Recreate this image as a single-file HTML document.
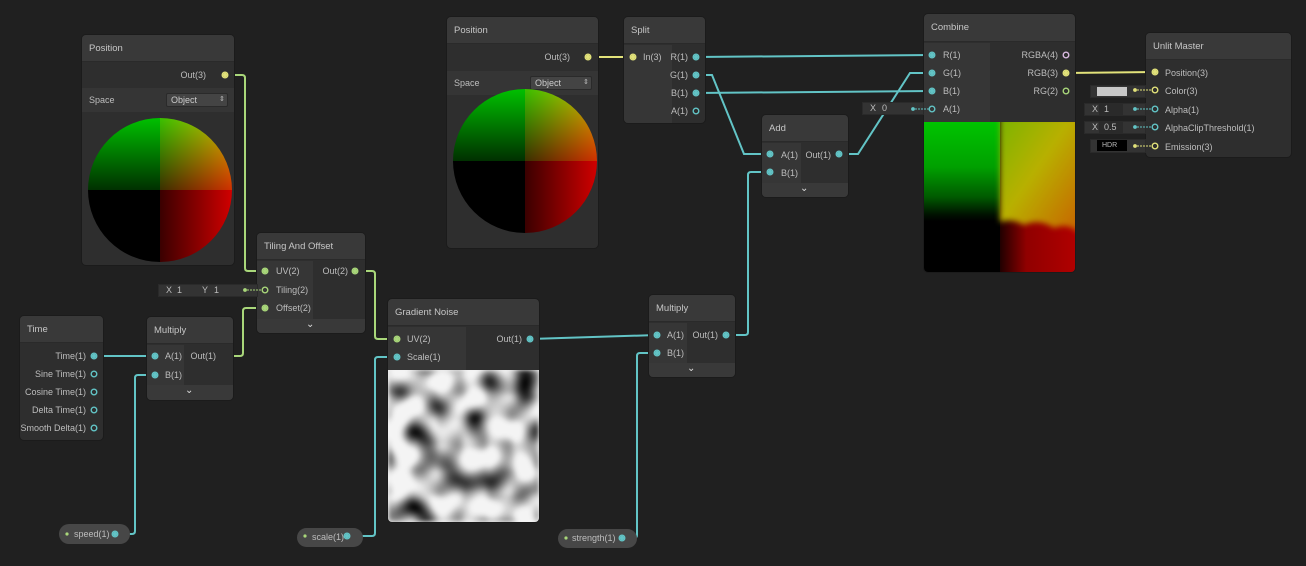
<!DOCTYPE html>
<html><head><meta charset="utf-8"><style>
*{margin:0;padding:0;box-sizing:border-box}
body{width:1306px;height:566px;background:#202020;overflow:hidden;position:relative;font-family:"Liberation Sans",sans-serif;font-size:9px;color:#bdbdbd}
.n{position:absolute;background:#2e2e2e;border-radius:4px;box-shadow:0 0 0 1px #1b1b1b}
.t{position:absolute;left:0;right:0;top:0;background:#393939;border-radius:4px 4px 0 0;border-bottom:1px solid #2a2a2a;padding-left:7px;color:#c6c6c6;font-size:9.5px}
.b{position:absolute}
.l{position:absolute;white-space:nowrap;line-height:10px}
.r{text-align:right}
svg{position:absolute;left:0;top:0}
.pill{position:absolute;background:#474747;border-radius:10px}
.fld{position:absolute;background:#333;border:1px solid #2a2a2a}
</style></head><body>
<svg width="1306" height="566" fill="none" stroke-width="2">
<g stroke="#62c4c6">
<path d="M94 356H155"/>
<path d="M115 534H132Q135 534 135 531V378Q135 375 138 375H155"/>
<path d="M347 536H372Q375 536 375 533V360Q375 357 378 357H397"/>
<path d="M530 339L657 335"/>
<path d="M622 538H634Q637 538 637 535V356Q637 353 640 353H657"/>
<path d="M726 335H745Q748 335 748 332V175Q748 172 751 172H770"/>
<path d="M696 57L932 55"/>
<path d="M696 75H712L744 154H770"/>
<path d="M696 93L932 91"/>
<path d="M839 154H858L910 73H932"/>
</g>
<g stroke="#a9d77a">
<path d="M225 75H242Q245 75 245 78V268Q245 271 248 271H265"/>
<path d="M355 271H372Q375 271 375 274V336Q375 339 378 339H397"/>
<path d="M225 356H240Q243 356 243 353V311Q243 308 246 308H265"/>
</g>
<g stroke="#e2e27a">
<path d="M588 57H633"/>
<path d="M1066 73L1155 72"/>
</g>
</svg>

<!-- Position 1 -->
<div class="n" style="left:82px;top:35px;width:152px;height:230px">
<div class="t" style="height:27px;line-height:27px">Position</div>
<div class="l r" style="right:28px;top:35px">Out(3)</div>
<div class="b" style="left:0;right:0;top:53px;height:24px;background:#353535"></div>
<div class="l" style="left:7px;top:60px">Space</div>
<div class="b" style="left:84px;top:58px;width:62px;height:14px;background:#444;border-radius:2px;border:1px solid #2a2a2a"></div>
<div class="l" style="left:89px;top:60px;color:#ccc">Object</div>
<div class="l" style="left:137px;top:60px;font-size:7px">⇕</div>
</div>
<!-- Position 2 -->
<div class="n" style="left:447px;top:17px;width:151px;height:231px">
<div class="t" style="height:27px;line-height:27px">Position</div>
<div class="l r" style="right:28px;top:35px">Out(3)</div>
<div class="b" style="left:0;right:0;top:54px;height:24px;background:#353535"></div>
<div class="l" style="left:7px;top:61px">Space</div>
<div class="b" style="left:83px;top:59px;width:62px;height:14px;background:#444;border-radius:2px;border:1px solid #2a2a2a"></div>
<div class="l" style="left:88px;top:61px;color:#ccc">Object</div>
<div class="l" style="left:136px;top:61px;font-size:7px">⇕</div>
</div>
<!-- Split -->
<div class="n" style="left:624px;top:17px;width:81px;height:106px">
<div class="t" style="height:27px;line-height:27px">Split</div>
<div class="b" style="left:0;top:28px;width:48px;bottom:0;background:#363636;border-radius:0 0 0 4px"></div>
<div class="l" style="left:19px;top:35px">In(3)</div>
<div class="l r" style="right:17px;top:35px">R(1)</div>
<div class="l r" style="right:17px;top:53px">G(1)</div>
<div class="l r" style="right:17px;top:71px">B(1)</div>
<div class="l r" style="right:17px;top:89px">A(1)</div>
</div>
<!-- Combine -->
<div class="n" style="left:924px;top:14px;width:151px;height:258px;overflow:hidden">
<div class="t" style="height:28px;line-height:28px">Combine</div>
<div class="b" style="left:0;top:29px;width:66px;height:79px;background:#363636"></div>
<div class="l" style="left:19px;top:36px">R(1)</div>
<div class="l" style="left:19px;top:54px">G(1)</div>
<div class="l" style="left:19px;top:72px">B(1)</div>
<div class="l" style="left:19px;top:90px">A(1)</div>
<div class="l r" style="right:17px;top:36px">RGBA(4)</div>
<div class="l r" style="right:17px;top:54px">RGB(3)</div>
<div class="l r" style="right:17px;top:72px">RG(2)</div>
<svg style="left:0;top:108px" width="151" height="150">
<defs>
<linearGradient id="cg" x1="0" y1="0" x2="0" y2="1"><stop offset="0" stop-color="#00c400"/><stop offset=".3" stop-color="#00a000"/><stop offset=".5" stop-color="#005a00"/><stop offset=".62" stop-color="#001000"/><stop offset=".66" stop-color="#000"/></linearGradient>
<linearGradient id="cy" x1="0" y1="0" x2="1" y2="1"><stop offset="0" stop-color="#7ab400"/><stop offset=".45" stop-color="#b8b000"/><stop offset="1" stop-color="#c86000"/></linearGradient>
<linearGradient id="cr" x1="0" y1="0" x2="1" y2="0"><stop offset="0" stop-color="#200000"/><stop offset=".35" stop-color="#900000"/><stop offset="1" stop-color="#b00000"/></linearGradient>
<filter id="bl"><feGaussianBlur stdDeviation="3"/></filter>
</defs>
<rect x="0" y="0" width="76" height="150" fill="url(#cg)"/>
<rect x="76" y="0" width="75" height="150" fill="url(#cr)"/>
<path d="M76 -5H156V112Q145 100 130 106Q115 96 100 103Q88 96 76 100Z" fill="url(#cy)" filter="url(#bl)"/>
</svg>
</div>
<!-- Unlit Master -->
<div class="n" style="left:1146px;top:33px;width:145px;height:124px">
<div class="t" style="height:27px;line-height:27px">Unlit Master</div>
<div class="l" style="left:19px;top:35px">Position(3)</div>
<div class="l" style="left:19px;top:53px">Color(3)</div>
<div class="l" style="left:19px;top:72px">Alpha(1)</div>
<div class="l" style="left:19px;top:90px">AlphaClipThreshold(1)</div>
<div class="l" style="left:19px;top:109px">Emission(3)</div>
</div>
<!-- Master fields -->
<div class="fld" style="left:1090px;top:85px;width:56px;height:13px"></div>
<div class="b" style="left:1097px;top:87px;width:30px;height:9px;background:#c8c8c8"></div>
<div class="fld" style="left:1084px;top:103px;width:62px;height:13px"></div>
<div class="l" style="left:1092px;top:104px">X</div><div class="b" style="left:1099px;top:104px;width:24px;height:11px;background:#2a2a2a"></div><div class="l" style="left:1104px;top:104px">1</div>
<div class="fld" style="left:1084px;top:121px;width:62px;height:13px"></div>
<div class="l" style="left:1092px;top:122px">X</div><div class="b" style="left:1099px;top:122px;width:24px;height:11px;background:#2a2a2a"></div><div class="l" style="left:1104px;top:122px">0.5</div>
<div class="fld" style="left:1090px;top:139px;width:56px;height:14px"></div>
<div class="b" style="left:1097px;top:140px;width:30px;height:11px;background:#000"></div>
<div class="l" style="left:1102px;top:141px;font-size:7px;color:#bbb">HDR</div>
<!-- X 0 field -->
<div class="fld" style="left:862px;top:102px;width:62px;height:13px"></div>
<div class="l" style="left:870px;top:103px">X</div><div class="l" style="left:882px;top:103px">0</div>
<!-- Add -->
<div class="n" style="left:762px;top:115px;width:86px;height:82px">
<div class="t" style="height:27px;line-height:27px">Add</div>
<div class="b" style="left:0;top:28px;width:39px;height:40px;background:#363636"></div>
<div class="l" style="left:19px;top:35px">A(1)</div>
<div class="l" style="left:19px;top:53px">B(1)</div>
<div class="l r" style="right:17px;top:35px">Out(1)</div>
<div class="b" style="left:0;right:0;top:68px;bottom:0;background:#393939;border-radius:0 0 4px 4px"></div>
<div class="l" style="left:38px;top:69px;font-size:10px;color:#ddd">⌄</div>
</div>
<!-- Tiling and offset -->
<div class="n" style="left:257px;top:233px;width:108px;height:100px">
<div class="t" style="height:27px;line-height:27px">Tiling And Offset</div>
<div class="b" style="left:0;top:28px;width:56px;height:58px;background:#363636"></div>
<div class="l" style="left:19px;top:33px">UV(2)</div>
<div class="l" style="left:19px;top:52px">Tiling(2)</div>
<div class="l" style="left:19px;top:70px">Offset(2)</div>
<div class="l r" style="right:17px;top:33px">Out(2)</div>
<div class="b" style="left:0;right:0;top:86px;bottom:0;background:#393939;border-radius:0 0 4px 4px"></div>
<div class="l" style="left:49px;top:87px;font-size:10px;color:#ddd">⌄</div>
</div>
<div class="fld" style="left:158px;top:284px;width:100px;height:13px"></div>
<div class="l" style="left:166px;top:285px">X</div><div class="l" style="left:177px;top:285px">1</div>
<div class="l" style="left:202px;top:285px">Y</div><div class="l" style="left:214px;top:285px">1</div>
<!-- Time -->
<div class="n" style="left:20px;top:316px;width:83px;height:124px">
<div class="t" style="height:27px;line-height:27px">Time</div>
<div class="l r" style="right:17px;top:35px">Time(1)</div>
<div class="l r" style="right:17px;top:53px">Sine Time(1)</div>
<div class="l r" style="right:17px;top:71px">Cosine Time(1)</div>
<div class="l r" style="right:17px;top:89px">Delta Time(1)</div>
<div class="l r" style="right:17px;top:107px">Smooth Delta(1)</div>
</div>
<!-- Multiply 1 -->
<div class="n" style="left:147px;top:317px;width:86px;height:83px">
<div class="t" style="height:27px;line-height:27px">Multiply</div>
<div class="b" style="left:0;top:28px;width:37px;height:40px;background:#363636"></div>
<div class="l" style="left:18px;top:34px">A(1)</div>
<div class="l" style="left:18px;top:53px">B(1)</div>
<div class="l r" style="right:17px;top:34px">Out(1)</div>
<div class="b" style="left:0;right:0;top:68px;bottom:0;background:#393939;border-radius:0 0 4px 4px"></div>
<div class="l" style="left:38px;top:69px;font-size:10px;color:#ddd">⌄</div>
</div>
<!-- Gradient noise -->
<div class="n" style="left:388px;top:299px;width:151px;height:223px;overflow:hidden">
<div class="t" style="height:27px;line-height:27px">Gradient Noise</div>
<div class="b" style="left:0;top:28px;width:78px;height:43px;background:#363636"></div>
<div class="l" style="left:19px;top:35px">UV(2)</div>
<div class="l" style="left:19px;top:53px">Scale(1)</div>
<div class="l r" style="right:17px;top:35px">Out(1)</div>
<svg style="left:0;top:71px" width="151" height="152">
<defs><filter id="nz" x="0" y="0" width="100%" height="100%">
<feTurbulence type="fractalNoise" baseFrequency="0.04" numOctaves="1" seed="7"/>
<feColorMatrix type="matrix" values="0 0 0 0 0  0 0 0 0 0  0 0 0 0 0  1 0 0 0 0"/>
<feComponentTransfer><feFuncA type="linear" slope="-3" intercept="1.75"/></feComponentTransfer>
<feGaussianBlur stdDeviation="2"/>
</filter></defs>
<rect width="151" height="152" fill="#f4f4f4"/>
<rect width="151" height="152" filter="url(#nz)" fill="#000"/>
</svg>
</div>
<!-- Multiply 2 -->
<div class="n" style="left:649px;top:295px;width:86px;height:82px">
<div class="t" style="height:27px;line-height:27px">Multiply</div>
<div class="b" style="left:0;top:28px;width:38px;height:40px;background:#363636"></div>
<div class="l" style="left:18px;top:35px">A(1)</div>
<div class="l" style="left:18px;top:53px">B(1)</div>
<div class="l r" style="right:17px;top:35px">Out(1)</div>
<div class="b" style="left:0;right:0;top:68px;bottom:0;background:#393939;border-radius:0 0 4px 4px"></div>
<div class="l" style="left:38px;top:69px;font-size:10px;color:#ddd">⌄</div>
</div>
<!-- Pills -->
<div class="pill" style="left:59px;top:524px;width:71px;height:20px"></div>
<div class="l" style="left:74px;top:529px">speed(1)</div>
<div class="pill" style="left:297px;top:528px;width:66px;height:19px"></div>
<div class="l" style="left:312px;top:532px">scale(1)</div>
<div class="pill" style="left:558px;top:529px;width:79px;height:19px"></div>
<div class="l" style="left:572px;top:533px">strength(1)</div>

<!-- Previews (spheres) -->
<svg width="1306" height="566" style="pointer-events:none">
<defs>
<linearGradient id="gv" x1="0" y1="0" x2="0" y2="1"><stop offset="0" stop-color="#00c000"/><stop offset=".5" stop-color="#003000"/><stop offset=".5" stop-color="#000"/></linearGradient>
<linearGradient id="rh" x1="0" y1="0" x2="1" y2="0"><stop offset=".5" stop-color="#000"/><stop offset=".5" stop-color="#3a0000"/><stop offset="1" stop-color="#d00000"/></linearGradient>
<clipPath id="c1"><circle cx="160" cy="190" r="72"/></clipPath>
<clipPath id="c2"><circle cx="525" cy="161" r="72"/></clipPath>
</defs>
<g clip-path="url(#c1)"><rect x="88" y="118" width="144" height="144" fill="url(#gv)"/><rect x="88" y="118" width="144" height="144" fill="url(#rh)" style="mix-blend-mode:screen"/></g>
<g clip-path="url(#c2)"><rect x="453" y="89" width="144" height="144" fill="url(#gv)"/><rect x="453" y="89" width="144" height="144" fill="url(#rh)" style="mix-blend-mode:screen"/></g>
</svg>

<!-- Ports -->
<svg width="1306" height="566" stroke-width="1.4">
<g stroke="#62c4c6" fill="#62c4c6">
<circle cx="94" cy="356" r="2.8" fill="none"/><circle cx="94" cy="356" r="1.4"/>
<circle cx="94" cy="374" r="2.8" fill="none"/><circle cx="94" cy="392" r="2.8" fill="none"/><circle cx="94" cy="410" r="2.8" fill="none"/><circle cx="94" cy="428" r="2.8" fill="none"/>
<circle cx="155" cy="356" r="2.8" fill="none"/><circle cx="155" cy="356" r="1.4"/>
<circle cx="155" cy="375" r="2.8" fill="none"/><circle cx="155" cy="375" r="1.4"/>
<circle cx="115" cy="534" r="2.8" fill="none"/><circle cx="115" cy="534" r="1.4"/>
<circle cx="347" cy="536" r="2.8" fill="none"/><circle cx="347" cy="536" r="1.4"/>
<circle cx="622" cy="538" r="2.8" fill="none"/><circle cx="622" cy="538" r="1.4"/>
<circle cx="397" cy="357" r="2.8" fill="none"/><circle cx="397" cy="357" r="1.4"/>
<circle cx="530" cy="339" r="2.8" fill="none"/><circle cx="530" cy="339" r="1.4"/>
<circle cx="657" cy="335" r="2.8" fill="none"/><circle cx="657" cy="335" r="1.4"/>
<circle cx="657" cy="353" r="2.8" fill="none"/><circle cx="657" cy="353" r="1.4"/>
<circle cx="726" cy="335" r="2.8" fill="none"/><circle cx="726" cy="335" r="1.4"/>
<circle cx="770" cy="154" r="2.8" fill="none"/><circle cx="770" cy="154" r="1.4"/>
<circle cx="770" cy="172" r="2.8" fill="none"/><circle cx="770" cy="172" r="1.4"/>
<circle cx="839" cy="154" r="2.8" fill="none"/><circle cx="839" cy="154" r="1.4"/>
<circle cx="696" cy="57" r="2.8" fill="none"/><circle cx="696" cy="57" r="1.4"/>
<circle cx="696" cy="75" r="2.8" fill="none"/><circle cx="696" cy="75" r="1.4"/>
<circle cx="696" cy="93" r="2.8" fill="none"/><circle cx="696" cy="93" r="1.4"/>
<circle cx="696" cy="111" r="2.8" fill="none"/>
<circle cx="932" cy="55" r="2.8" fill="none"/><circle cx="932" cy="55" r="1.4"/>
<circle cx="932" cy="73" r="2.8" fill="none"/><circle cx="932" cy="73" r="1.4"/>
<circle cx="932" cy="91" r="2.8" fill="none"/><circle cx="932" cy="91" r="1.4"/>
<circle cx="932" cy="109" r="2.8" fill="none"/>
<circle cx="1155" cy="109" r="2.8" fill="none"/><circle cx="1155" cy="127" r="2.8" fill="none"/>
<circle cx="913" cy="109" r="1.2"/><circle cx="1135" cy="109" r="1.2"/><circle cx="1135" cy="127" r="1.2"/>
<path d="M915 109H929M1137 109H1152M1137 127H1152" stroke-width="1" stroke-dasharray="2 1"/>
</g>
<g stroke="#a9d77a" fill="#a9d77a">
<circle cx="265" cy="271" r="2.8" fill="none"/><circle cx="265" cy="271" r="1.4"/>
<circle cx="265" cy="290" r="2.8" fill="none"/>
<circle cx="265" cy="308" r="2.8" fill="none"/><circle cx="265" cy="308" r="1.4"/>
<circle cx="355" cy="271" r="2.8" fill="none"/><circle cx="355" cy="271" r="1.4"/>
<circle cx="397" cy="339" r="2.8" fill="none"/><circle cx="397" cy="339" r="1.4"/>
<circle cx="1066" cy="91" r="2.8" fill="none"/>
<circle cx="245" cy="290" r="1.2"/><path d="M247 290H262" stroke-width="1" stroke-dasharray="2 1"/>
<circle cx="67" cy="534" r="1.6" stroke="none"/><circle cx="305" cy="536" r="1.6" stroke="none"/><circle cx="566" cy="538" r="1.6" stroke="none"/>
</g>
<g stroke="#e2e27a" fill="#e2e27a">
<circle cx="225" cy="75" r="2.8" fill="none"/><circle cx="225" cy="75" r="1.4"/>
<circle cx="588" cy="57" r="2.8" fill="none"/><circle cx="588" cy="57" r="1.4"/>
<circle cx="633" cy="57" r="2.8" fill="none"/><circle cx="633" cy="57" r="1.4"/>
<circle cx="1066" cy="73" r="2.8" fill="none"/><circle cx="1066" cy="73" r="1.4"/>
<circle cx="1155" cy="72" r="2.8" fill="none"/><circle cx="1155" cy="72" r="1.4"/>
<circle cx="1155" cy="90" r="2.8" fill="none"/><circle cx="1155" cy="146" r="2.8" fill="none"/>
<circle cx="1135" cy="90" r="1.2"/><circle cx="1135" cy="146" r="1.2"/>
<path d="M1137 90H1152M1137 146H1152" stroke-width="1" stroke-dasharray="2 1"/>
</g>
<circle cx="1066" cy="55" r="2.8" stroke="#d8b8e0" fill="none"/>
</svg>
</body></html>
